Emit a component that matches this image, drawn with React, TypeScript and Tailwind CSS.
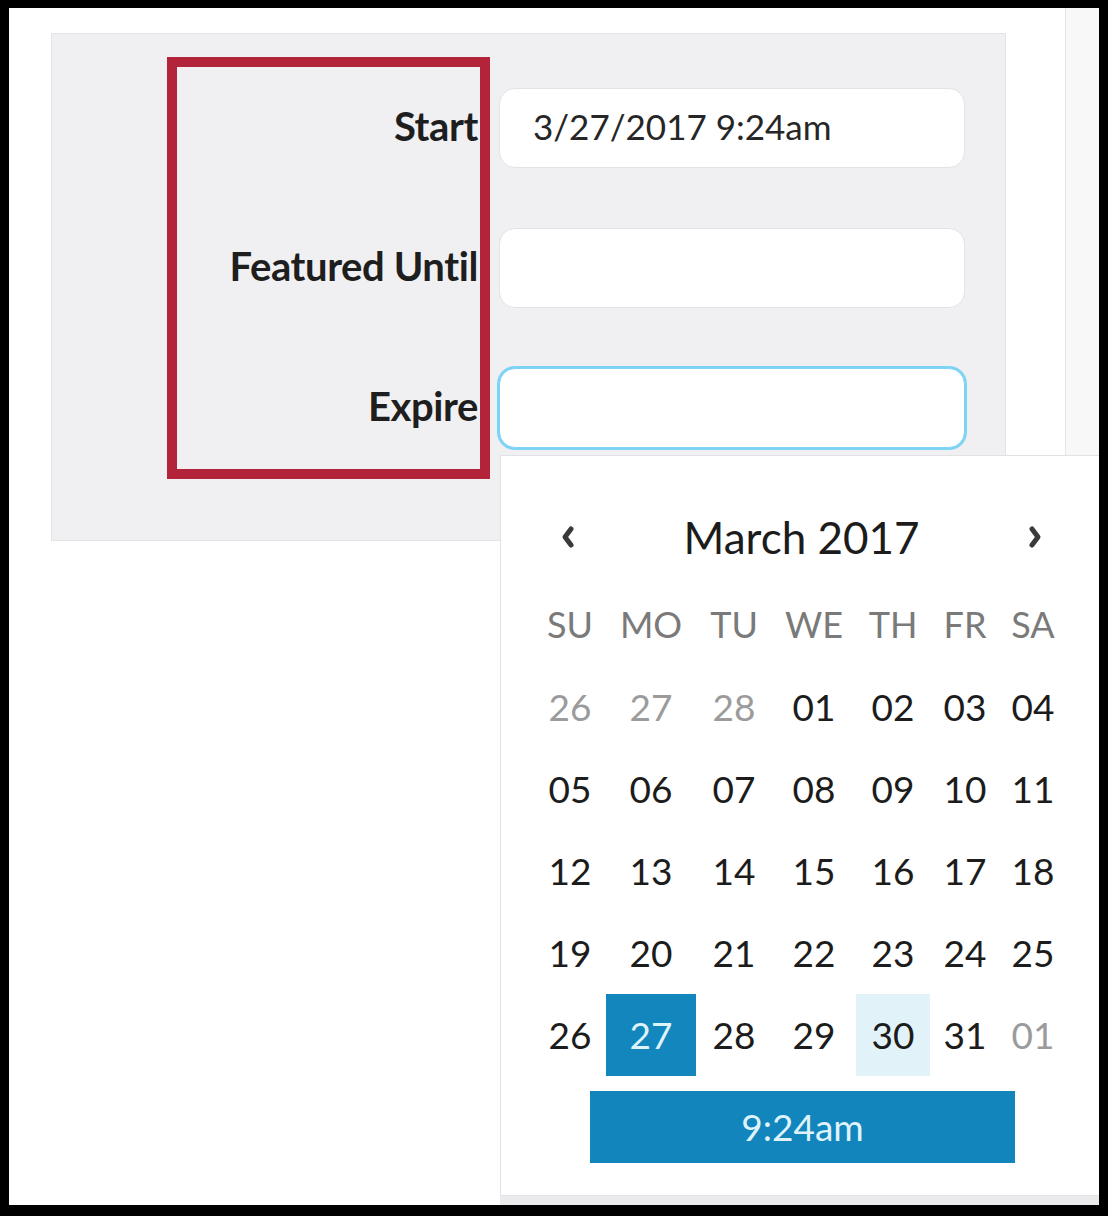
import React from 'react';

type Day = { label: string; muted?: boolean; selected?: boolean; hover?: boolean };

const weekDays = ['SU', 'MO', 'TU', 'WE', 'TH', 'FR', 'SA'];

const weeks: Day[][] = [
  [
    { label: '26', muted: true },
    { label: '27', muted: true },
    { label: '28', muted: true },
    { label: '01' },
    { label: '02' },
    { label: '03' },
    { label: '04' },
  ],
  ['05', '06', '07', '08', '09', '10', '11'].map((d) => ({ label: d })),
  ['12', '13', '14', '15', '16', '17', '18'].map((d) => ({ label: d })),
  ['19', '20', '21', '22', '23', '24', '25'].map((d) => ({ label: d })),
  [
    { label: '26' },
    { label: '27', selected: true },
    { label: '28' },
    { label: '29' },
    { label: '30', hover: true },
    { label: '31' },
    { label: '01', muted: true },
  ],
];

const Chevron = ({ dir }: { dir: 'left' | 'right' }) => (
  <svg width="16" height="30" viewBox="0 0 16 30" className="shrink-0">
    <polyline
      points={dir === 'left' ? '11,7 5,15 11,23' : '5,7 11,15 5,23'}
      fill="none"
      stroke="#3a3a3a"
      strokeWidth="5"
      strokeLinecap="round"
      strokeLinejoin="round"
    />
  </svg>
);

const Field = ({ label, value, focused }: { label: string; value?: string; focused?: boolean }) => (
  <div className="flex items-center">
    <label className="w-[426px] pb-[4px] text-right text-[40px] font-bold text-[#1e1e1e] tracking-[-0.4px]">{label}</label>
    <div
      className={
        focused
          ? 'ml-[21px] w-[466px] h-[80px] bg-white rounded-[16px] border border-[#7dd3f4] shadow-[0_0_0_2px_#7dd3f4] flex items-center pl-[33px] pb-[4px]'
          : 'ml-[21px] w-[466px] h-[80px] bg-white rounded-[16px] border border-[#e3e3e6] flex items-center pl-[33px] pb-[4px]'
      }
    >
      <span className="text-[35px] text-[#262626]">{value}</span>
    </div>
  </div>
);

const DatePicker = () => {
  const cols = 'grid grid-cols-[72px_90px_76px_84px_74px_70px_66px]';
  return (
    <div className="absolute left-[491px] top-[447px] w-[620px] flex flex-col">
      <div className="bg-white/95 border-l border-t border-b border-[#e2e2e6] pt-[36px] pl-[33px] pb-[32px]">
        <div className="w-[532px] h-[90px] flex items-center">
          <span className="ml-[26px]"><Chevron dir="left" /></span>
          <span className="flex-1 text-center text-[44px] text-[#1c1c1c]">March 2017</span>
          <span className="mr-[23px]"><Chevron dir="right" /></span>
        </div>
        <div className={`${cols} w-[532px] h-[84px] items-center`}>
          {weekDays.map((d) => (
            <span key={d} className="text-center text-[36px] text-[#7a7a7a]">{d}</span>
          ))}
        </div>
        {weeks.map((week, i) => (
          <div key={i} className={`${cols} w-[532px] h-[82px]`}>
            {week.map((day, j) => (
              <span
                key={j}
                className={
                  day.selected
                    ? 'flex items-center justify-center text-[37px] bg-[#1286bd] text-[#dff3fb]'
                    : day.hover
                    ? 'flex items-center justify-center text-[37px] bg-[#e2f2f9] text-[#1c1c1c]'
                    : day.muted
                    ? 'flex items-center justify-center text-[37px] text-[#9b9b9b]'
                    : 'flex items-center justify-center text-[37px] text-[#1c1c1c]'
                }
              >
                {day.label}
              </span>
            ))}
          </div>
        ))}
        <button className="mt-[15px] ml-[56px] w-[425px] h-[72px] bg-[#1185bc] text-[#dff3fb] text-[37px] flex items-center justify-center">
          9:24am
        </button>
      </div>
      <div className="h-[9px] bg-[#ebebee]" />
    </div>
  );
};

export default function App() {
  return (
    <div className="w-[1108px] h-[1216px] bg-black pt-[8px] pl-[9px] pr-[9px] pb-[11px] font-['Lato','Noto_Sans',sans-serif]">
      <div className="relative w-full h-full bg-white overflow-hidden flex">
        <div className="flex-1 pl-[42px] pt-[25px]">
          <div className="w-[955px] h-[508px] bg-[#f0f0f2] border border-[#e4e4e7] pt-[54px] flex flex-col gap-[60px]">
            <Field label="Start" value="3/27/2017 9:24am" />
            <Field label="Featured Until" />
            <Field label="Expire" focused />
          </div>
        </div>
        <div className="w-[34px] bg-[#f8f8f9] border-l border-[#e6e6e9]" />

        {/* annotation box */}
        <div className="absolute left-[158px] top-[49px] w-[323px] h-[422px] border-[10px] border-[#b3243a] pointer-events-none" />

        <DatePicker />
      </div>
    </div>
  );
}
